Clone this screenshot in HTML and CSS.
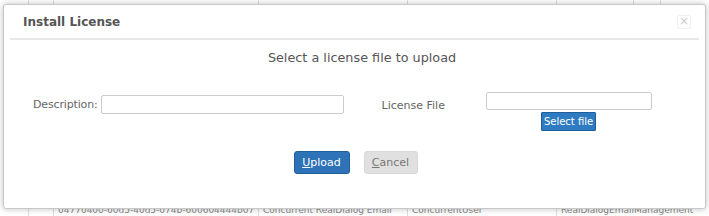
FILE: index.html
```html
<!DOCTYPE html>
<html lang="en">
<head>
  <meta charset="UTF-8">
  <title>Install License</title>
  <link rel="stylesheet" href="styles.css">
</head>
<body>

  <div class="page">
    <div class="grid-row top">
      <span class="cell c1"></span>
      <span class="cell c2"></span>
      <span class="cell c3"></span>
      <span class="cell c4"></span>
      <span class="cell c5"></span>
      <span class="cell c6"></span>
      <span class="cell c7"></span>
    </div>
    <div class="grid-spacer"></div>
    <div class="grid-row bottom">
      <span class="cell c1"></span>
      <span class="cell c2">04770400-60d5-40d5-074b-600604444b07</span>
      <span class="cell c3">Concurrent RealDialog Email</span>
      <span class="cell c4">ConcurrentUser</span>
      <span class="cell c5 wide">RealDialogEmailManagement</span>
    </div>
  </div>

  <!-- modal sits over the license table -->
  <div class="modal">
    <div class="modal-header">
      <h3>Install License</h3>
      <span class="close">&times;</span>
    </div>
    <div class="modal-body">
      <p class="intro">Select a license file to upload</p>
      <div class="fields">
        <div class="field desc">
          <label for="description">Description:</label>
          <input type="text" id="description">
        </div>
        <div class="field file">
          <label>License File</label>
          <div class="file-box">
            <input type="text" id="licenseFile" readonly>
            <button class="btn-select">Select file</button>
          </div>
        </div>
      </div>
      <div class="actions">
        <button class="btn btn-primary"><u>U</u>pload</button>
        <button class="btn btn-default"><u>C</u>ancel</button>
      </div>
    </div>
  </div>

</body>
</html>
```

FILE: styles.css
```css
body {
  margin: 0;
  padding: 0;
  background-color: #fff;
  font-family: "DejaVu Sans", Verdana, sans-serif;
  color: #444;
}
.page {
  height: 216px;
  display: flex;
  flex-direction: column;
  overflow: hidden;
}
.grid-row {
  display: flex;
  padding-left: 28px;
  font-size: 9px;
  color: #888;
}
.top {
  height: 12px;
}
.bottom {
  height: 11px;
  line-height: 11px;
}
.grid-spacer {
  flex: 1;
}
.cell {
  box-sizing: border-box;
  border-left: 1px solid #ddd;
  padding-left: 4px;
  white-space: nowrap;
  overflow: hidden;
}
.c1 { width: 25px; }
.c2 { width: 205px; }
.c3 { width: 149px; }
.c4 { width: 149px; }
.c5 { width: 77px; }
.c6 { width: 27px; }
.c7 { flex: 1; }
.c5.wide { flex: 1; }

.modal {
  position: absolute;
  left: 3px;
  top: 4px;
  width: 701px;
  height: 203px;
  background-color: #fff;
  border: 1px solid #c8c8c8;
  border-radius: 3px;
  box-shadow: 0 0 6px rgba(0, 0, 0, 0.25);
}
.modal-header {
  display: flex;
  align-items: center;
  justify-content: space-between;
  height: 33px;
  margin: 0 6px;
  padding: 0 8px 0 13px;
  border-bottom: 2px solid #e8e8e8;
}
.modal-header h3 {
  margin: 0;
  font-size: 12px;
  font-weight: bold;
  color: #555;
}
.close {
  width: 12px;
  height: 12px;
  line-height: 11px;
  text-align: center;
  font-size: 12px;
  color: #ccc;
  border: 1px solid #f0f0f0;
  border-radius: 2px;
}
.modal-body {
  padding: 0 6px;
}
.intro {
  margin: 10px 0 0;
  padding-left: 15px;
  text-align: center;
  font-size: 12.8px;
  color: #555;
}
.fields {
  display: flex;
  align-items: flex-start;
  margin-top: 27px;
  height: 46px;
}
.field label {
  font-size: 11px;
  color: #666;
}
.desc {
  display: flex;
  align-items: center;
  margin-left: 23px;
  margin-top: 3px;
}
.desc label {
  margin-right: 3px;
  letter-spacing: -0.15px;
}
.desc input {
  width: 239px;
  height: 15px;
  padding: 1px;
  border: 1px solid #ccc;
  border-radius: 2px;
}
.file {
  display: flex;
  align-items: flex-start;
  margin-left: 38px;
}
.file label {
  margin-top: 7px;
  width: 104px;
}
.file-box {
  display: flex;
  flex-direction: column;
  align-items: center;
}
.file-box input {
  width: 162px;
  height: 14px;
  padding: 1px;
  border: 1px solid #ccc;
  border-radius: 2px;
}
.btn-select {
  margin-top: 2px;
  height: 19px;
  padding: 0 2px;
  font-family: "DejaVu Sans", Verdana, sans-serif;
  font-size: 10px;
  color: #fff;
  background-color: #2f7bc1;
  border: 1px solid #1f5e99;
  border-radius: 1px;
}
.actions {
  display: flex;
  justify-content: center;
  gap: 14px;
  margin-top: 13px;
  padding-left: 2px;
}
.btn {
  height: 23px;
  padding: 0 6px;
  font-family: "DejaVu Sans", Verdana, sans-serif;
  font-size: 11px;
  border-radius: 3px;
  cursor: pointer;
}
.btn-primary {
  width: 56px;
  color: #fff;
  background-color: #2e72b7;
  border: 1px solid #245e97;
}
.btn-default {
  width: 54px;
  color: #777;
  background-color: #e0e0e0;
  border: 1px solid #d8d8d8;
}
```
